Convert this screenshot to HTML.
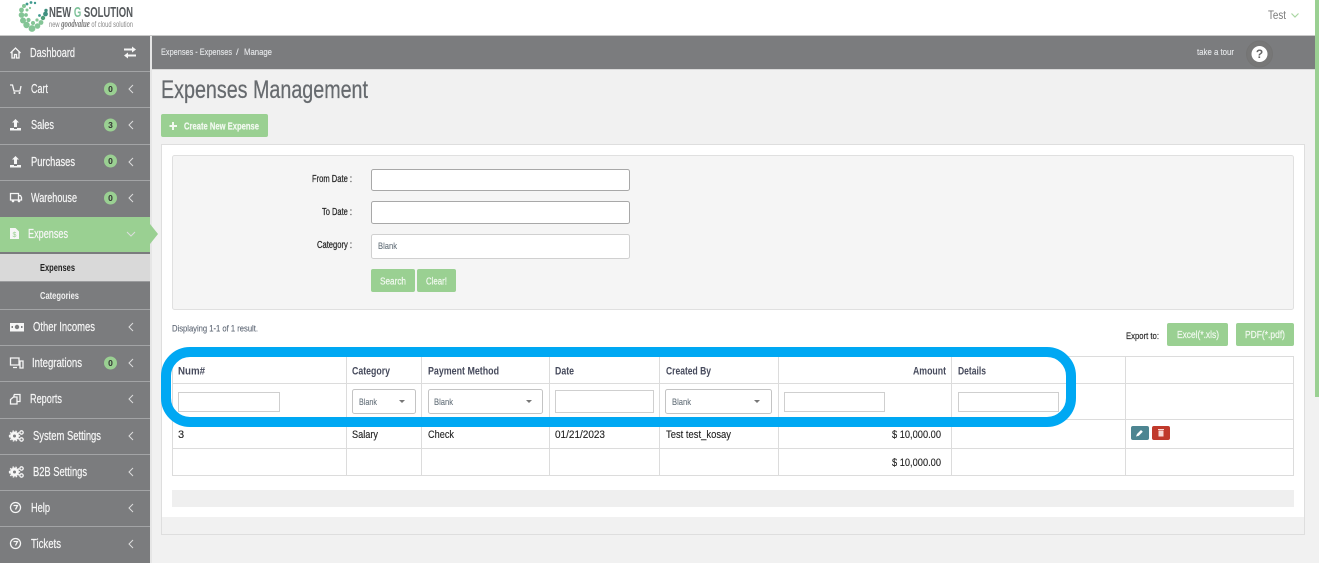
<!DOCTYPE html>
<html><head><meta charset="utf-8"><style>
html,body{margin:0;padding:0;width:1322px;height:563px;overflow:hidden;background:#f1f1f1}
svg{display:block}
text{font-family:"Liberation Sans",sans-serif;white-space:pre}
.m{font-size:12.5px;fill:#f6f6f6;stroke:#f6f6f6;stroke-width:.2}
.b{font-size:9.5px;fill:#e6e8ea;stroke:#e6e8ea;stroke-width:.12}
.h{font-size:11px;font-weight:bold;fill:#464a5c}
.c{font-size:11px;fill:#222;stroke:#222;stroke-width:.12}
.l{font-size:10px;fill:#222;stroke:#222;stroke-width:.2}
.bt{font-size:10px;fill:#f2f9f0;stroke:#f2f9f0;stroke-width:.2}
.bl{font-size:9.5px;fill:#64707a;stroke:#64707a;stroke-width:.1}
.bd{font-size:8.5px;font-weight:bold;fill:#333;text-anchor:middle}
.ic{fill:none;stroke:#f6f6f6;stroke-width:1.3}
.if{fill:#f6f6f6}
.ch{fill:none;stroke:#ddd;stroke-width:1}
</style></head><body>
<svg xmlns="http://www.w3.org/2000/svg" width="1322" height="563" viewBox="0 0 1322 563">
<rect width="1322" height="563" fill="#f1f1f1"/>
<!-- header -->
<rect width="1322" height="35" fill="#fff"/>
<rect y="35" width="1322" height="1" fill="#c9c9c9"/>
<!-- logo -->
<g fill="#84c596">
<circle cx="27" cy="4" r="1.4" fill="#3f9a8f"/><circle cx="31" cy="2.500" r="1.400" fill="#3f9a8f"/><circle cx="35" cy="3" r="1.200" fill="#3f9a8f"/>
<circle cx="24" cy="6" r="2"/><circle cx="21.500" cy="10" r="2.400"/><circle cx="21.500" cy="15" r="2.800"/><circle cx="23" cy="20.500" r="3"/><circle cx="26.500" cy="25" r="3.200"/><circle cx="32" cy="28.500" r="3.400"/><circle cx="37.500" cy="26" r="2.800"/><circle cx="41" cy="22.500" r="2.400"/><circle cx="43" cy="18" r="2.200" fill="#4f9f7a"/><circle cx="45.500" cy="14" r="2.400" fill="#3f8f7f"/><circle cx="46" cy="10.500" r="1.700" fill="#3f8f7f"/>
<circle cx="27" cy="10" r="1.500"/><circle cx="26" cy="15" r="1.900"/><circle cx="28.500" cy="20" r="2.100"/><circle cx="33" cy="23" r="2"/><circle cx="37" cy="20" r="1.600"/><circle cx="30" cy="8" r="1.100"/><circle cx="39.500" cy="15.500" r="1.400" fill="#3f9a8f"/>
</g>
<text x="49" y="17" font-size="15" font-weight="bold" fill="#55595c" textLength="84" lengthAdjust="spacingAndGlyphs">NEW <tspan fill="#7fc29a">G</tspan> SOLUTION</text>
<text x="49" y="27" font-size="8.500" fill="#8a8a8a" textLength="84" lengthAdjust="spacingAndGlyphs">new <tspan font-family="Liberation Serif" font-style="italic" font-weight="bold" fill="#777" font-size="10">goodvalue</tspan> of cloud solution</text>
<text x="1268" y="19" font-size="12" fill="#7a7a7a" textLength="18" lengthAdjust="spacingAndGlyphs">Test</text>
<path d="M1291.500 13.500l3.500 3.500 3.500-3.500" fill="none" stroke="#a9d6a2" stroke-width="1.200"/>
<!-- scrollbar -->
<rect x="1315" y="0" width="7" height="563" fill="#f1f1f1"/>
<rect x="1319" y="0" width="3" height="563" fill="#fff"/>
<rect x="1315" y="0" width="4" height="397" fill="#9ad092"/>
<!-- breadcrumb bar -->
<rect x="151" y="36" width="1164" height="33" fill="#7b7c7e"/>
<rect x="151" y="69" width="1164" height="1" fill="#d9d9d9"/>
<text class="b" x="161" y="55" textLength="71" lengthAdjust="spacingAndGlyphs">Expenses - Expenses</text>
<text class="b" x="236" y="55">/</text>
<text class="b" x="244" y="55" textLength="28" lengthAdjust="spacingAndGlyphs">Manage</text>
<text class="b" x="1197" y="55" textLength="37" lengthAdjust="spacingAndGlyphs">take a tour</text>
<circle cx="1259.500" cy="54" r="13" fill="#777" stroke="#747474"/>
<circle cx="1259.500" cy="54" r="8" fill="#fff"/>
<text x="1259.500" y="58" text-anchor="middle" font-size="12" font-weight="bold" fill="#666">?</text>
<!-- sidebar -->
<rect x="0" y="36" width="150" height="527" fill="#7b7c7e"/>
<rect x="150" y="36" width="2" height="527" fill="#e6e6e6"/>
<g fill="#a3a4a6">
<rect y="71" width="150" height="1"/><rect y="107" width="150" height="1"/><rect y="144" width="150" height="1"/><rect y="180" width="150" height="1"/>
<rect y="309" width="150" height="1"/><rect y="345" width="150" height="1"/><rect y="381" width="150" height="1"/><rect y="418" width="150" height="1"/><rect y="454" width="150" height="1"/><rect y="490" width="150" height="1"/><rect y="526" width="150" height="1"/>
</g>
<rect y="217" width="150" height="35" fill="#9ad092"/>
<path d="M150 224l8 10-8 10z" fill="#9ad092"/>
<rect y="254" width="150" height="27" fill="#d9d9d9"/>
<rect y="281" width="150" height="1" fill="#9a9b9d"/>
<text class="m" x="30" y="57" textLength="45" lengthAdjust="spacingAndGlyphs">Dashboard</text>
<text class="m" x="31" y="93" textLength="17" lengthAdjust="spacingAndGlyphs">Cart</text>
<text class="m" x="31" y="129" textLength="23" lengthAdjust="spacingAndGlyphs">Sales</text>
<text class="m" x="31" y="166" textLength="44" lengthAdjust="spacingAndGlyphs">Purchases</text>
<text class="m" x="31" y="202" textLength="46" lengthAdjust="spacingAndGlyphs">Warehouse</text>
<text class="m" x="28" y="238" textLength="40" lengthAdjust="spacingAndGlyphs">Expenses</text>
<text x="40" y="271" font-size="10" font-weight="bold" fill="#222" textLength="35" lengthAdjust="spacingAndGlyphs">Expenses</text>
<text x="40" y="299" font-size="10" font-weight="bold" fill="#f0f0f0" textLength="39" lengthAdjust="spacingAndGlyphs">Categories</text>
<text class="m" x="33" y="331" textLength="62" lengthAdjust="spacingAndGlyphs">Other Incomes</text>
<text class="m" x="32" y="367" textLength="50" lengthAdjust="spacingAndGlyphs">Integrations</text>
<text class="m" x="30" y="403" textLength="32" lengthAdjust="spacingAndGlyphs">Reports</text>
<text class="m" x="33" y="440" textLength="68" lengthAdjust="spacingAndGlyphs">System Settings</text>
<text class="m" x="33" y="476" textLength="54" lengthAdjust="spacingAndGlyphs">B2B Settings</text>
<text class="m" x="31" y="512" textLength="19" lengthAdjust="spacingAndGlyphs">Help</text>
<text class="m" x="31" y="548" textLength="30" lengthAdjust="spacingAndGlyphs">Tickets</text>
<!-- badges -->
<g fill="#9ad092">
<circle cx="110.500" cy="89" r="6.500"/><circle cx="110.500" cy="125" r="6.500"/><circle cx="110.500" cy="161" r="6.500"/><circle cx="110.500" cy="198" r="6.500"/><circle cx="110.500" cy="363" r="6.500"/>
</g>
<text class="bd" x="110.500" y="92">0</text><text class="bd" x="110.500" y="128">3</text><text class="bd" x="110.500" y="164">0</text><text class="bd" x="110.500" y="201">0</text><text class="bd" x="110.500" y="366">0</text>
<!-- chevrons -->
<g class="ch">
<path d="M133 85l-4 4 4 4"/><path d="M133 121l-4 4 4 4"/><path d="M133 158l-4 4 4 4"/><path d="M133 194l-4 4 4 4"/>
<path d="M133 323l-4 4 4 4"/><path d="M133 359l-4 4 4 4"/><path d="M133 395l-4 4 4 4"/><path d="M133 432l-4 4 4 4"/><path d="M133 468l-4 4 4 4"/><path d="M133 504l-4 4 4 4"/><path d="M133 540l-4 4 4 4"/>
<path d="M127 232l4 4 4-4"/>
</g>
<!-- icons -->
<path class="ic" d="M10.500 53l5-5 5 5M12 52v6h2.500v-3.500h2V58H19v-6" stroke-width="1"/>
<path class="if" d="M124 49.500h8v-2l4 3-4 3v-2h-8zM136 55.500h-8v-2l-4 3 4 3v-2h8z" transform="translate(0,-1)"/>
<path class="ic" d="M10 85h2.500l1.500 6h6l1-5" stroke-width="1.200"/><circle class="if" cx="14.500" cy="93" r="1"/><circle class="if" cx="19.500" cy="93" r="1"/>
<path class="if" d="M15.500 119l3.500 3.500h-2V127h-3v-4.500h-2zM10 128h4v1h3v-1h4v2.500H10z"/>
<path class="if" d="M15.500 156l3.500 3.500h-2V164h-3v-4.500h-2zM10 165h4v1h3v-1h4v2.500H10z"/>
<path class="ic" d="M10.500 193.500h8v6.500h-8zM18.500 195.500h2l1 2v2.500h-3" stroke-width="1"/><circle class="if" cx="13" cy="201" r="1.300"/><circle class="if" cx="19" cy="201" r="1.300"/>
<path class="if" d="M10 228h5.500l3.500 3.500V239h-9z"/><text x="14.500" y="237" text-anchor="middle" font-size="7" fill="#9ad092">$</text>
<rect class="if" x="10" y="323" width="14" height="8.500"/><circle cx="17" cy="327" r="2.200" fill="#7b7c7e"/><rect x="11.500" y="326" width="1.500" height="2" fill="#7b7c7e"/><rect x="21" y="326" width="1.500" height="2" fill="#7b7c7e"/>
<path class="ic" d="M10.500 358h8.500v7h-8.500zM13 367.500h4M19.500 361h3.500v7h-3v-7" stroke-width="1"/>
<path class="ic" d="M14 394.500h6v7h-3M14 394.500l-0 2M13.500 397h3.500v7h-6.500v-4.500z" stroke-width="1.100"/>
<g><circle class="if" cx="14.500" cy="436" r="4.500"/><circle cx="14.500" cy="436" r="1.500" fill="#7b7c7e"/><path class="ic" stroke-dasharray="1.500 1.500" d="M9.500 436a5 5 0 1 0 10 0a5 5 0 1 0-10 0" stroke-width="1.600"/><circle class="ic" cx="21.500" cy="432.500" r="1.700"/><circle class="ic" cx="21.500" cy="439.500" r="1.700"/></g>
<g transform="translate(0,36)"><circle class="if" cx="14.500" cy="436" r="4.500"/><circle cx="14.500" cy="436" r="1.500" fill="#7b7c7e"/><path class="ic" stroke-dasharray="1.500 1.500" d="M9.500 436a5 5 0 1 0 10 0a5 5 0 1 0-10 0" stroke-width="1.600"/><circle class="ic" cx="21.500" cy="432.500" r="1.700"/><circle class="ic" cx="21.500" cy="439.500" r="1.700"/></g>
<circle class="ic" cx="15.500" cy="507.500" r="5"/><path class="ic" d="M13.500 505.500h4l-2 4" stroke-width="1.100"/>
<circle class="ic" cx="15.500" cy="543.500" r="5"/><path class="ic" d="M13.500 541.500h4l-2 4" stroke-width="1.100"/>
<!-- title -->
<text x="161" y="98" font-size="25" fill="#666a6e" stroke="#666a6e" stroke-width=".25" textLength="207" lengthAdjust="spacingAndGlyphs">Expenses Management</text>
<rect x="161" y="114" width="107" height="23" rx="2" fill="#9ad092"/>
<path d="M173 122v8M169.500 126h7.500" stroke="#f2f9f0" stroke-width="2"/>
<text class="bt" x="184" y="129.500" font-weight="bold" textLength="75" lengthAdjust="spacingAndGlyphs">Create New Expense</text>
<!-- panel -->
<rect x="161.500" y="144.500" width="1143" height="390" fill="#fff" stroke="#dedede"/>
<rect x="162" y="517" width="1142" height="17" fill="#f1f1f1"/>
<rect x="172.500" y="155.500" width="1121" height="154" rx="2" fill="#f5f5f5" stroke="#e0e0e0"/>
<text class="l" x="312" y="182" textLength="40" lengthAdjust="spacingAndGlyphs">From Date :</text>
<text class="l" x="322" y="215" textLength="30" lengthAdjust="spacingAndGlyphs">To Date :</text>
<text class="l" x="317" y="248" textLength="35" lengthAdjust="spacingAndGlyphs">Category :</text>
<rect x="371.500" y="169.500" width="258" height="21" rx="2" fill="#fff" stroke="#a8a8a8"/>
<rect x="371.500" y="201.500" width="258" height="22" rx="2" fill="#fff" stroke="#a8a8a8"/>
<rect x="371.500" y="234.500" width="258" height="24" rx="2" fill="#fff" stroke="#d0d0d0"/>
<text class="bl" x="378" y="249" textLength="19" lengthAdjust="spacingAndGlyphs">Blank</text>
<rect x="371" y="269" width="44" height="23" rx="2" fill="#9ad092"/>
<rect x="417" y="269" width="39" height="23" rx="2" fill="#9ad092"/>
<text class="bt" x="380" y="284.500" textLength="26" lengthAdjust="spacingAndGlyphs">Search</text>
<text class="bt" x="426" y="284.500" textLength="21" lengthAdjust="spacingAndGlyphs">Clear!</text>
<text x="172" y="331.500" font-size="9.500" fill="#5b6472" stroke="#5b6472" stroke-width=".1" textLength="86" lengthAdjust="spacingAndGlyphs">Displaying 1-1 of 1 result.</text>
<text x="1126" y="339" font-size="9.500" fill="#222" stroke="#222" stroke-width=".15" textLength="33" lengthAdjust="spacingAndGlyphs">Export to:</text>
<rect x="1167" y="323" width="61" height="23" rx="2" fill="#9ad092"/>
<rect x="1236" y="323" width="58" height="23" rx="2" fill="#9ad092"/>
<text class="bt" x="1177" y="338" textLength="42" lengthAdjust="spacingAndGlyphs">Excel(*.xls)</text>
<text class="bt" x="1245" y="338" textLength="40" lengthAdjust="spacingAndGlyphs">PDF(*.pdf)</text>
<!-- table -->
<g fill="none" stroke="#dcdcdc">
<rect x="172.500" y="356.500" width="1121" height="119"/>
<path d="M172 383.500h1122M172 419.500h1122M172 448.500h1122M346.500 356v120M421.500 356v120M549.500 356v120M659.500 356v120M778.500 356v120M951.500 356v120M1125.500 356v120"/>
</g>
<text class="h" x="178" y="374.500" textLength="27" lengthAdjust="spacingAndGlyphs">Num#</text>
<text class="h" x="352" y="374.500" textLength="38" lengthAdjust="spacingAndGlyphs">Category</text>
<text class="h" x="428" y="374.500" textLength="71" lengthAdjust="spacingAndGlyphs">Payment Method</text>
<text class="h" x="555" y="374.500" textLength="19" lengthAdjust="spacingAndGlyphs">Date</text>
<text class="h" x="666" y="374.500" textLength="45" lengthAdjust="spacingAndGlyphs">Created By</text>
<text class="h" x="913" y="374.500" textLength="33" lengthAdjust="spacingAndGlyphs">Amount</text>
<text class="h" x="958" y="374.500" textLength="28" lengthAdjust="spacingAndGlyphs">Details</text>
<g fill="#fff" stroke="#cfcfcf">
<rect x="178.500" y="392.500" width="101" height="19"/>
<rect x="555.500" y="390.500" width="98" height="22"/>
<rect x="784.500" y="392.500" width="100" height="19"/>
<rect x="958.500" y="392.500" width="100" height="19"/>
<rect x="352.500" y="389.500" width="63" height="24" rx="2" stroke="#c4c4c4"/>
<rect x="428.500" y="389.500" width="114" height="24" rx="2" stroke="#c4c4c4"/>
<rect x="665.500" y="389.500" width="106" height="24" rx="2" stroke="#c4c4c4"/>
</g>
<text class="bl" x="359" y="405" textLength="18" lengthAdjust="spacingAndGlyphs">Blank</text>
<text class="bl" x="434" y="405" textLength="19" lengthAdjust="spacingAndGlyphs">Blank</text>
<text class="bl" x="672" y="405" textLength="19" lengthAdjust="spacingAndGlyphs">Blank</text>
<g fill="#777"><path d="M399 400h6l-3 3z"/><path d="M526 400h6l-3 3z"/><path d="M754 400h6l-3 3z"/></g>
<text class="c" x="178" y="438">3</text>
<text class="c" x="352" y="438" textLength="26" lengthAdjust="spacingAndGlyphs">Salary</text>
<text class="c" x="428" y="438" textLength="26" lengthAdjust="spacingAndGlyphs">Check</text>
<text class="c" x="555" y="438" textLength="50" lengthAdjust="spacingAndGlyphs">01/21/2023</text>
<text class="c" x="666" y="438" textLength="65" lengthAdjust="spacingAndGlyphs">Test test_kosay</text>
<text class="c" x="892" y="438" textLength="49" lengthAdjust="spacingAndGlyphs">$ 10,000.00</text>
<text class="c" x="892" y="466" textLength="49" lengthAdjust="spacingAndGlyphs">$ 10,000.00</text>
<rect x="1131" y="426" width="18" height="14" rx="2" fill="#4d8591"/>
<path d="M1136 436.500l1-2.500 4-4 1.800 1.800-4 4z" fill="#fff"/>
<rect x="1152" y="426" width="18" height="14" rx="2" fill="#c0392b"/>
<path d="M1158 429h6v1h-6zM1158.500 430.500h5v6h-5z" fill="#f7d9d5"/>
<rect x="172" y="490" width="1122" height="17" fill="#efefef"/>
<!-- annotation -->
<rect x="166" y="352" width="905" height="70" rx="24" fill="none" stroke="#00a8f3" stroke-width="10"/>
</svg>
</body></html>
